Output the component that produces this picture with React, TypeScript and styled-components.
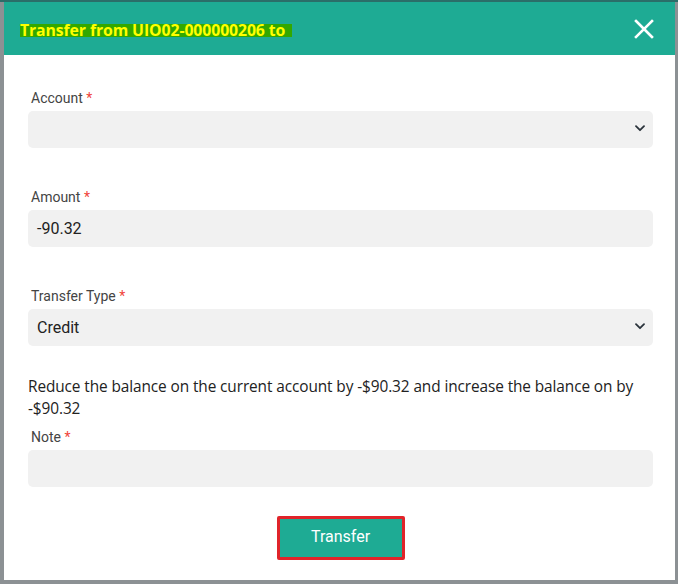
import React from 'react';
import styled, { createGlobalStyle } from 'styled-components';

const GlobalStyle = createGlobalStyle`
  html, body {
    margin: 0;
    padding: 0;
    background: #8c9194;
    font-family: Roboto, "Liberation Sans", Arial, sans-serif;
  }
  * { box-sizing: border-box; }
`;

const Backdrop = styled.div`
  width: 678px;
  height: 584px;
  padding: 2px 3px 4px 4px;
  background: linear-gradient(#2b6e69 0 2px, #8c9194 2px);
`;

const Modal = styled.div`
  width: 671px;
  height: 578px;
  background: #ffffff;
  display: flex;
  flex-direction: column;
`;

const Header = styled.div`
  height: 53px;
  background: #1eab94;
  display: flex;
  align-items: center;
  justify-content: space-between;
  padding: 0 20px 0 16px;
`;

const Title = styled.h5`
  margin: 4px 0 0;
  font-family: "Open Sans", "Liberation Sans", sans-serif;
  font-weight: 700;
  font-size: 15.8px;
  line-height: 13px;
  color: #ffff00;
  background: #33a800;
  padding-right: 7px;
  letter-spacing: -0.1px;
`;

const CloseButton = styled.button`
  border: 0;
  background: transparent;
  padding: 0;
  width: 22px;
  height: 22px;
  display: flex;
  align-items: center;
  justify-content: center;
  cursor: pointer;
`;

const Body = styled.div`
  padding: 33px 22px 0 24px;
  display: flex;
  flex-direction: column;
`;

const Group = styled.div<{ $gap?: number }>`
  display: flex;
  flex-direction: column;
  margin-bottom: ${(p) => p.$gap ?? 39}px;
`;

const Label = styled.label`
  font-size: 14px;
  line-height: 20px;
  color: #444;
  padding-left: 3px;
  margin-bottom: 3px;
`;

const Required = styled.span`
  color: #f0443a;
`;

const Field = styled.div`
  position: relative;
  height: 37px;
  background: #f1f1f1;
  border-radius: 5px;
  display: flex;
  align-items: center;
  padding: 0 9px;
  font-size: 16px;
  color: #222;
`;

const Chevron = styled.svg`
  position: absolute;
  right: 8px;
  top: 14px;
`;

const Description = styled.p`
  margin: 0 0 7px;
  max-width: 620px;
  font-family: "Open Sans", "Liberation Sans", sans-serif;
  font-size: 15.4px;
  line-height: 22px;
  color: #222;
  letter-spacing: -0.1px;
`;

const Footer = styled.div`
  display: flex;
  justify-content: center;
  margin-top: 29px;
`;

const SubmitButton = styled.button`
  width: 128px;
  height: 44px;
  border: 3px solid #e0242a;
  border-radius: 2px;
  background: #1eab94;
  color: #ffffff;
  font-family: Roboto, "Liberation Sans", sans-serif;
  font-size: 16px;
  padding: 0 0 4px;
`;

const SelectArrow = () => (
  <Chevron width="10" height="7" viewBox="0 0 10 7" fill="none">
    <path d="M1 1.2 L5 5.2 L9 1.2" stroke="#2a333b" strokeWidth="1.8" strokeLinecap="round" strokeLinejoin="round" />
  </Chevron>
);

type FieldProps = { label: string; value?: string; select?: boolean; gap?: number };

const FormField = ({ label, value, select, gap }: FieldProps) => (
  <Group $gap={gap}>
    <Label>
      {label} <Required>*</Required>
    </Label>
    <Field>
      {value}
      {select && <SelectArrow />}
    </Field>
  </Group>
);

export default function App() {
  return (
    <>
      <GlobalStyle />
      <Backdrop>
        <Modal>
          <Header>
            <Title>Transfer from UIO02-000000206 to</Title>
            <CloseButton aria-label="Close">
              <svg width="20" height="20" viewBox="0 0 20 20">
                <path d="M2 2 L18 18 M18 2 L2 18" stroke="#ffffff" strokeWidth="2.6" strokeLinecap="square" />
              </svg>
            </CloseButton>
          </Header>
          <Body>
            <FormField label="Account" select />
            <FormField label="Amount" value="-90.32" />
            <FormField label="Transfer Type" value="Credit" select gap={30} />
            <Description>
              Reduce the balance on the current account by -$90.32 and increase the balance on by -$90.32
            </Description>
            <FormField label="Note" gap={0} />
            <Footer>
              <SubmitButton>Transfer</SubmitButton>
            </Footer>
          </Body>
        </Modal>
      </Backdrop>
    </>
  );
}
